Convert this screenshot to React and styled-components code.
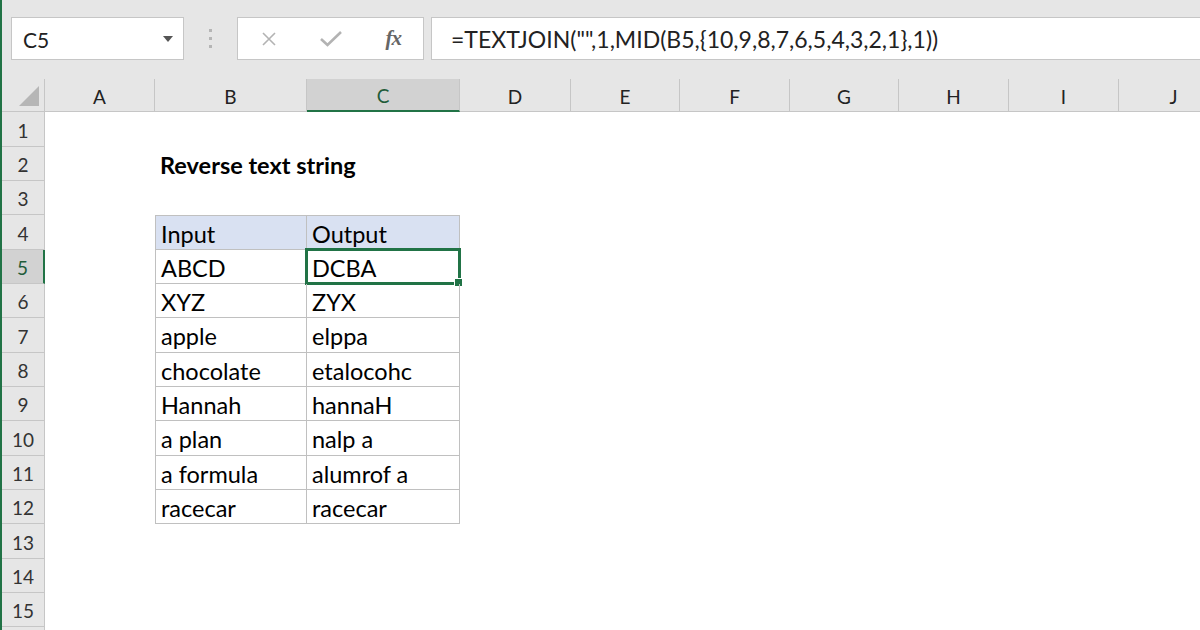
import React from 'react';
import styled, { createGlobalStyle, css } from 'styled-components';

const GREEN = '#217346';
const GRID = '#c6c6c6';
const TABLE = '#c0c0c0';

const Global = createGlobalStyle`
  html, body { margin: 0; padding: 0; }
  body {
    width: 1200px; height: 630px; overflow: hidden; background: #fff;
    font-family: Lato, "Open Sans", sans-serif;
  }
`;

const Window = styled.div`
  width: 1200px;
  height: 630px;
  overflow: hidden;
  box-sizing: border-box;
  border-left: 2px solid ${GREEN};
  display: flex;
  flex-direction: column;
  background: #fff;
`;

const TopBar = styled.div`
  height: 79px;
  flex: none;
  box-sizing: border-box;
  background: #e6e6e6;
  display: flex;
  align-items: flex-start;
  padding: 17px 0 0 9px;
`;

const Box = styled.div`
  height: 43px;
  box-sizing: border-box;
  background: #fff;
  border: 1px solid ${GRID};
  display: flex;
  align-items: center;
`;

const NameBox = styled(Box)`
  width: 173px;
  padding: 1px 10px 0 11px;
  justify-content: space-between;
  font-size: 21px;
  color: #222;
`;

const Caret = styled.span`
  width: 0;
  height: 0;
  border-left: 5px solid transparent;
  border-right: 5px solid transparent;
  border-top: 6px solid #555;
  margin-top: 0;
`;

const Grip = styled.div`
  width: 53px;
  height: 43px;
  display: flex;
  flex-direction: column;
  align-items: center;
  justify-content: center;
  gap: 5px;
`;

const GripDot = styled.span`
  width: 3px;
  height: 3px;
  background: #b5b5b5;
`;

const FuncBox = styled(Box)`
  width: 187px;
`;

const IconSlot = styled.div`
  width: 62px;
  height: 100%;
  display: flex;
  align-items: center;
  justify-content: center;
`;

const Fx = styled.span`
  font-family: "Liberation Serif", "DejaVu Serif", serif;
  font-style: italic;
  font-weight: bold;
  font-size: 21px;
  color: #666;
  letter-spacing: -1px;
  margin-left: 2px;
`;

const FormulaBox = styled(Box)`
  flex: 1;
  margin-left: 7px;
  margin-right: -20px;
  padding: 1px 0 0 19px;
  font-size: 23px;
  color: #222;
  white-space: nowrap;
`;

const COLS = '43px 110px 152px 153px 111px 109px 110px 109px 110px 110px 110px';

const HeaderRow = styled.div`
  display: grid;
  grid-template-columns: ${COLS};
  height: 33px;
  flex: none;
  background: #e6e6e6;
`;

const Corner = styled.div`
  border-right: 1px solid ${GRID};
  border-bottom: 1px solid ${GRID};
  display: flex;
  align-items: flex-end;
  justify-content: flex-end;
  padding: 0 5px 5px 0;
`;

const ColHead = styled.div`
  box-sizing: border-box;
  display: flex;
  align-items: center;
  justify-content: center;
  font-size: 19px;
  color: #222;
  border-right: 1px solid ${GRID};
  border-bottom: 1px solid ${GRID};
  padding-top: 2px;
  ${(p) =>
    p.$active &&
    css`
      background: #d2d2d2;
      color: #1f5c3a;
      border-bottom: 2px solid ${GREEN};
    `}
`;

const Row = styled.div`
  display: grid;
  grid-template-columns: ${COLS};
  height: ${(p) => p.$h}px;
  flex: none;
`;

const RowHead = styled.div`
  box-sizing: border-box;
  background: #e6e6e6;
  border-right: 1px solid ${GRID};
  border-bottom: 1px solid ${GRID};
  display: flex;
  align-items: center;
  justify-content: center;
  font-size: 19px;
  color: #333;
  padding-top: 2px;
  ${(p) =>
    p.$active &&
    css`
      background: #d2d2d2;
      color: #1f5c3a;
      border-right: 2px solid ${GREEN};
    `}
`;

const Cell = styled.div`
  position: relative;
  box-sizing: border-box;
  display: flex;
  align-items: center;
  padding: 2px 0 0 5px;
  font-size: 23.5px;
  color: #000;
  white-space: nowrap;
  font-weight: ${(p) => (p.$bold ? 700 : 400)};
  ${(p) =>
    p.$boxed &&
    css`
      border-right: 1px solid ${TABLE};
      border-bottom: 1px solid ${TABLE};
    `}
  ${(p) => p.$boxTop && css`border-top: 1px solid ${TABLE};`}
  ${(p) => p.$boxLeft && css`border-left: 1px solid ${TABLE};`}
  ${(p) => p.$fill && css`background: #d9e1f2;`}
`;

const Selection = styled.div`
  position: absolute;
  top: -2px;
  left: -2px;
  right: -2px;
  bottom: -2px;
  border: 3px solid ${GREEN};
  pointer-events: none;
`;

const Handle = styled.span`
  position: absolute;
  right: -5px;
  bottom: -5px;
  width: 7px;
  height: 7px;
  background: ${GREEN};
  border: 1px solid #fff;
`;

const LETTERS = ['A', 'B', 'C', 'D', 'E', 'F', 'G', 'H', 'I', 'J'];
const HEIGHTS = [35, 34, 34, 35, 34, 34, 35, 34, 34, 35, 34, 34, 35, 34, 34, 36];

const DATA = [
  ['Input', 'Output'],
  ['ABCD', 'DCBA'],
  ['XYZ', 'ZYX'],
  ['apple', 'elppa'],
  ['chocolate', 'etalocohc'],
  ['Hannah', 'hannaH'],
  ['a plan', 'nalp a'],
  ['a formula', 'alumrof a'],
  ['racecar', 'racecar'],
];

export default function App() {
  return (
    <>
      <Global />
      <Window>
        <TopBar>
          <NameBox>
            <span>C5</span>
            <Caret />
          </NameBox>
          <Grip>
            <GripDot />
            <GripDot />
            <GripDot />
          </Grip>
          <FuncBox>
            <IconSlot>
              <svg width="16" height="16" viewBox="0 0 16 16">
                <path d="M2 2 L14 14 M14 2 L2 14" stroke="#b3b3b3" strokeWidth="1.6" fill="none" />
              </svg>
            </IconSlot>
            <IconSlot>
              <svg width="24" height="19" viewBox="0 0 24 19">
                <path d="M2 10 L8.5 16 L22 3" stroke="#b3b3b3" strokeWidth="2.6" fill="none" />
              </svg>
            </IconSlot>
            <IconSlot>
              <Fx>fx</Fx>
            </IconSlot>
          </FuncBox>
          <FormulaBox>=TEXTJOIN("",1,MID(B5,{'{'}10,9,8,7,6,5,4,3,2,1{'}'},1))</FormulaBox>
        </TopBar>
        <HeaderRow>
          <Corner>
            <svg width="20" height="20" viewBox="0 0 20 20">
              <path d="M20 0 L20 20 L0 20 Z" fill="#b6b6b6" />
            </svg>
          </Corner>
          {LETTERS.map((l) => (
            <ColHead key={l} $active={l === 'C'}>
              {l}
            </ColHead>
          ))}
        </HeaderRow>
        {HEIGHTS.map((h, i) => {
          const r = i + 1;
          const ti = r - 4;
          const inTable = ti >= 0 && ti < DATA.length;
          return (
            <Row key={r} $h={h}>
              <RowHead $active={r === 5}>{r <= 15 ? r : ''}</RowHead>
              <Cell />
              <Cell
                $bold={r === 2}
                $boxed={inTable}
                $boxTop={ti === 0}
                $boxLeft={inTable}
                $fill={ti === 0}
              >
                {r === 2 ? 'Reverse text string' : inTable ? DATA[ti][0] : ''}
              </Cell>
              <Cell $boxed={inTable} $boxTop={ti === 0} $fill={ti === 0}>
                {inTable ? DATA[ti][1] : ''}
                {r === 5 && (
                  <Selection>
                    <Handle />
                  </Selection>
                )}
              </Cell>
              <Cell />
              <Cell />
              <Cell />
              <Cell />
              <Cell />
              <Cell />
              <Cell />
            </Row>
          );
        })}
      </Window>
    </>
  );
}
